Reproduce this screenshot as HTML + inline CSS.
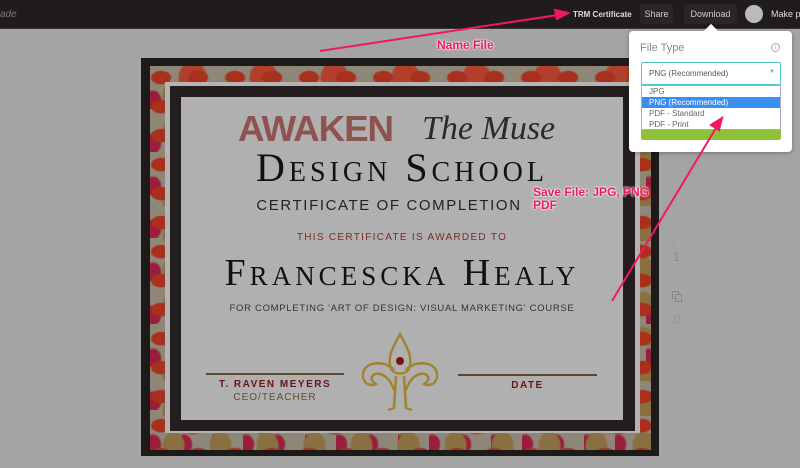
<!DOCTYPE html>
<html><head><meta charset="utf-8"><style>
*{margin:0;padding:0;box-sizing:border-box}
body{width:800px;height:468px;overflow:hidden;background:#a4a4a4;font-family:"Liberation Sans",sans-serif;position:relative}
.top{position:absolute;left:0;top:0;width:800px;height:29px;background:#201c1c;border-bottom:1px solid #3a3535}
.abs{position:absolute}
.pat{background:
radial-gradient(ellipse at 30% 40%,#a8301c 0 9px,transparent 11px),
radial-gradient(ellipse at 75% 65%,#2f7a66 0 6px,transparent 8px),
radial-gradient(ellipse at 50% 85%,#8a7040 0 10px,transparent 12px),
radial-gradient(ellipse at 10% 80%,#9a1e3c 0 7px,transparent 9px),
radial-gradient(ellipse at 60% 20%,#b0402a 0 13px,transparent 15px),
#8e8676;background-size:37px 29px,53px 41px,47px 35px,31px 43px,71px 57px}
.serif{font-family:"Liberation Serif",serif}
.c{text-align:center;left:181px;width:442px;white-space:nowrap}
</style></head><body>
<div class="top"></div>
<div class="abs" style="left:0;top:9px;font-size:10px;color:#777;font-style:italic">ade</div>
<div class="abs" style="left:573px;top:10px;font-size:8px;font-weight:bold;color:#ddd">TRM Certificate</div>
<div class="abs" style="left:640px;top:4px;width:33px;height:20px;background:#2b2626;border-radius:3px;color:#ccc;font-size:9px;line-height:20px;text-align:center">Share</div>
<div class="abs" style="left:684px;top:4px;width:53px;height:20px;background:#2b2626;border-radius:3px;color:#ccc;font-size:9px;line-height:20px;text-align:center">Download</div>
<div class="abs" style="left:745px;top:5px;width:18px;height:18px;border-radius:50%;background:#bbb"></div>
<div class="abs" style="left:771px;top:9px;font-size:9px;color:#ddd;white-space:nowrap">Make p</div>

<div class="abs" style="left:141px;top:58px;width:518px;height:398px;background:#1f1a1a"></div>
<div class="abs pat" style="left:150px;top:66px;width:501px;height:384px"></div>
<div class="abs" style="left:165px;top:82px;width:475px;height:351px;background:#b4b4b4"></div>
<div class="abs" style="left:170px;top:86px;width:465px;height:345px;background:#231d1d"></div>
<div class="abs" style="left:181px;top:97px;width:442px;height:323px;background:#b0b0b0"></div>

<div class="abs" style="left:238px;top:108px;font-size:36px;font-weight:900;letter-spacing:-1px;color:#8e5250;white-space:nowrap;transform:scaleX(1.02);transform-origin:left">AWAKEN</div>
<div class="abs serif" style="left:422px;top:110px;font-size:34px;font-style:italic;color:#2a2a2a;white-space:nowrap;font-weight:normal">The Muse</div>
<div class="abs serif c" style="top:144px;font-size:40px;color:#111;letter-spacing:4px;font-variant:small-caps">Design School</div>
<div class="abs c" style="top:197px;font-size:15px;color:#222;letter-spacing:1.6px;left:181px;width:416px">CERTIFICATE OF COMPLETION</div>
<div class="abs c" style="top:232px;font-size:10px;color:#7a2a2a;letter-spacing:1.3px">THIS CERTIFICATE IS AWARDED TO</div>
<div class="abs serif c" style="top:251px;font-size:38px;color:#111;letter-spacing:4px;font-variant:small-caps">Francescka Healy</div>
<div class="abs c" style="top:303px;font-size:9.5px;color:#333;letter-spacing:0.7px">FOR COMPLETING 'ART OF DESIGN: VISUAL MARKETING' COURSE</div>
<div class="abs" style="left:206px;top:373px;width:138px;height:2px;background:#5a4a2a"></div>
<div class="abs" style="left:458px;top:374px;width:139px;height:2px;background:#5a4a2a"></div>
<div class="abs" style="left:206px;top:379px;width:138px;text-align:center;font-size:10px;font-weight:bold;color:#6a1414;letter-spacing:1.5px">T. RAVEN MEYERS</div>
<div class="abs" style="left:206px;top:392px;width:138px;text-align:center;font-size:10px;color:#5e5030;letter-spacing:1px">CEO/TEACHER</div>
<div class="abs" style="left:458px;top:380px;width:139px;text-align:center;font-size:10px;font-weight:bold;color:#6a1414;letter-spacing:1.5px">DATE</div>
<svg class="abs" style="left:358px;top:332px" width="84" height="82" viewBox="0 0 84 82">
<g fill="none" stroke="#a08430" stroke-width="2.5">
<path d="M42 2 C36 14 30 22 32 34 C34 44 50 44 52 34 C54 22 48 14 42 2Z"/>
<path d="M36 38 C30 30 12 28 6 38 C2 48 10 56 18 52 C10 48 14 40 22 42 C30 44 34 52 36 58"/>
<path d="M48 38 C54 30 72 28 78 38 C82 48 74 56 66 52 C74 48 70 40 62 42 C54 44 50 52 48 58"/>
<path d="M38 44 L36 76 L30 78 M46 44 L48 76 L54 78"/>
</g><circle cx="42" cy="29" r="4" fill="#7a1010"/></svg>

<div class="abs" style="left:670px;top:238px;color:#999;font-size:10px">▵</div>
<div class="abs" style="left:673px;top:250px;color:#8a8a8a;font-size:12px">1</div>
<div class="abs" style="left:670px;top:268px;color:#999;font-size:10px">▿</div>
<div class="abs" style="left:672px;top:291px;width:7px;height:8px;border:1px solid #888"></div>
<div class="abs" style="left:675px;top:294px;width:7px;height:8px;border:1px solid #888;background:#a4a4a4"></div>
<div class="abs" style="left:674px;top:315px;width:6px;height:8px;border:1px solid #999"></div>

<div class="abs" style="left:629px;top:31px;width:163px;height:121px;background:#fff;border-radius:4px;box-shadow:0 1px 4px rgba(0,0,0,.3)"></div>
<div class="abs" style="left:706px;top:26px;width:10px;height:10px;background:#fff;transform:rotate(45deg)"></div>
<div class="abs" style="left:640px;top:42px;font-size:11px;color:#888">File Type</div>
<div class="abs" style="left:771px;top:43px;width:9px;height:9px;border:1px solid #aaa;border-radius:50%;font-size:6px;color:#aaa;text-align:center;line-height:8px">i</div>
<div class="abs" style="left:641px;top:62px;width:140px;height:23px;border:1px solid #4cc3c8;border-radius:2px;font-size:8px;color:#555;padding:6px 0 0 7px">PNG (Recommended)<span style="position:absolute;right:5px;top:6px;color:#999;font-size:6px">▼</span></div>
<div class="abs" style="left:641px;top:85px;width:140px;height:45px;border:1px solid #aac;background:#fff;font-size:8px;color:#666">
<div style="height:11px;line-height:11px;padding-left:7px">JPG</div>
<div style="height:11px;line-height:11px;padding-left:7px;background:#3a8ef0;color:#fff">PNG (Recommended)</div>
<div style="height:11px;line-height:11px;padding-left:7px">PDF - Standard</div>
<div style="height:11px;line-height:11px;padding-left:7px">PDF - Print</div></div>
<div class="abs" style="left:641px;top:130px;width:140px;height:10px;background:#8fc03a;border-radius:0 0 2px 2px"></div>

<svg class="abs" style="left:0;top:0" width="800" height="468">
<g stroke="#f0195f" stroke-width="2" fill="#f0195f">
<line x1="320" y1="51" x2="558" y2="15"/><polygon points="568,13 555,10 557,19" />
<line x1="612" y1="301" x2="716" y2="128"/><polygon points="722,118 711,125 719,130"/></g></svg>
<div class="abs" style="left:437px;top:38px;font-size:12px;font-weight:bold;color:#f0195f;text-shadow:0 0 2px #fff,0 0 2px #fff">Name File</div>
<div class="abs" style="left:533px;top:186px;font-size:12px;font-weight:bold;color:#f0195f;line-height:13px;text-shadow:0 0 2px #fff,0 0 2px #fff">Save File: JPG, PNG<br>PDF</div>
</body></html>
